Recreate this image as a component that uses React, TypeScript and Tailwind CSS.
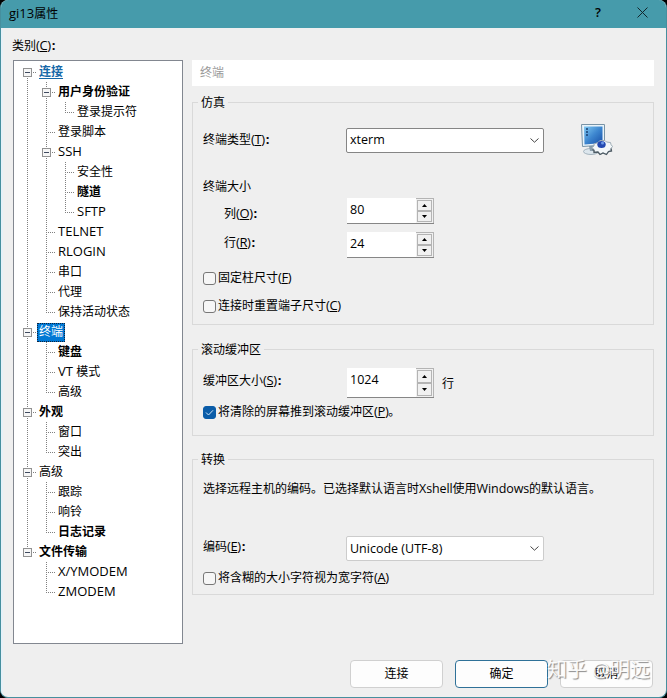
import React, { useState } from 'react';

type Guide = 'none' | 'line' | 'tee' | 'end' | 'boxFirst' | 'box' | 'boxLast';

type Item = {
  label: string;
  guides: Guide[];
  bold?: boolean;
  link?: boolean;
};

const items: Item[] = [
  { label: '连接', guides: ['boxFirst'], bold: true, link: true },
  { label: '用户身份验证', guides: ['line', 'box'], bold: true },
  { label: '登录提示符', guides: ['line', 'line', 'end'] },
  { label: '登录脚本', guides: ['line', 'tee'] },
  { label: 'SSH', guides: ['line', 'box'] },
  { label: '安全性', guides: ['line', 'line', 'tee'] },
  { label: '隧道', guides: ['line', 'line', 'tee'], bold: true },
  { label: 'SFTP', guides: ['line', 'line', 'end'] },
  { label: 'TELNET', guides: ['line', 'tee'] },
  { label: 'RLOGIN', guides: ['line', 'tee'] },
  { label: '串口', guides: ['line', 'tee'] },
  { label: '代理', guides: ['line', 'tee'] },
  { label: '保持活动状态', guides: ['line', 'end'] },
  { label: '终端', guides: ['box'] },
  { label: '键盘', guides: ['line', 'tee'], bold: true },
  { label: 'VT 模式', guides: ['line', 'tee'] },
  { label: '高级', guides: ['line', 'end'] },
  { label: '外观', guides: ['box'], bold: true },
  { label: '窗口', guides: ['line', 'tee'] },
  { label: '突出', guides: ['line', 'end'] },
  { label: '高级', guides: ['box'] },
  { label: '跟踪', guides: ['line', 'tee'] },
  { label: '响铃', guides: ['line', 'tee'] },
  { label: '日志记录', guides: ['line', 'end'], bold: true },
  { label: '文件传输', guides: ['boxLast'], bold: true },
  { label: 'X/YMODEM', guides: ['none', 'tee'] },
  { label: 'ZMODEM', guides: ['none', 'end'] },
];

// Latin runs are drawn a little larger than the 12px Chinese text
const Mixed = ({ text, className = 'text-[13px]' }: { text: string; className?: string }) => (
  <>
    {text.split(/([A-Za-z0-9/\-() :]+)/).map((part, i) =>
      i % 2 ? <span key={i} className={`leading-[15px] whitespace-pre ${className}`}>{part}</span> : part
    )}
  </>
);

const GuideCell = ({ kind }: { kind: Guide }) => {
  const hasBox = kind.startsWith('box');
  const top = kind !== 'none' && kind !== 'boxFirst';
  const bottom = kind === 'line' || kind === 'tee' || kind === 'box' || kind === 'boxFirst';
  return (
    <svg width="19" height="20" className="shrink-0" shapeRendering="crispEdges" fill="none" stroke="#808080">
      {top && <path d="M9.5 0V10" strokeDasharray="1 1" />}
      {bottom && <path d="M9.5 10V20" strokeDasharray="1 1" />}
      {kind !== 'none' && kind !== 'line' && <path d="M9 10.5H19" strokeDasharray="1 1" />}
      {hasBox && (
        <>
          <rect x="5.5" y="6.5" width="8" height="8" fill="#f6f6f6" stroke="#919191" />
          <path d="M7 10.5H12" stroke="#404b60" />
        </>
      )}
    </svg>
  );
};

const TreeRow = ({ item, selected, onClick }: { item: Item; selected: boolean; onClick: () => void }) => (
  <div className="flex h-5 items-center" onClick={onClick}>
    {item.guides.map((kind, i) => (
      <GuideCell key={i} kind={kind} />
    ))}
    <span
      className={`flex h-[19px] items-center whitespace-nowrap ${item.bold ? 'font-bold' : ''} ${
        selected
          ? 'bg-[#0078d4] px-0.5 text-white outline-1 -outline-offset-1 outline-dotted outline-[#10243c]'
          : 'pr-px pl-0.5'
      } ${item.link ? 'text-[#1668a8]' : ''}`}
    >
      <span className={item.link ? 'underline underline-offset-2' : ''}>
        <Mixed text={item.label} />
      </span>
    </span>
  </div>
);

const Hotkey = ({ letter, end = '' }: { letter: string; end?: string }) => (
  <span className="text-[13px] leading-[15px] tracking-[-0.4px]">
    (<span className="underline underline-offset-1">{letter}</span>){end && <b className="ml-px">{end}</b>}
  </span>
);

const Group = ({ title, className, children }: { title: string; className: string; children: React.ReactNode }) => (
  <fieldset className={`border border-[#d9d9d9] px-2.5 ${className}`}>
    <legend className="-ml-[5px] h-4 px-[3px] pt-px leading-4">{title}</legend>
    {children}
  </fieldset>
);

const Select = ({ value, className }: { value: string; className: string }) => (
  <div className={`flex h-[25px] w-[198px] items-center justify-between rounded-[2px] border bg-white pr-1 pl-[3px] ${className}`}>
    <span className="text-[12.5px]">{value}</span>
    <svg width="9" height="5" fill="none" stroke="#444">
      <path d="M.5 .5L4.5 4.2L8.5 .5" />
    </svg>
  </div>
);

const SpinButton = ({ up = false }: { up?: boolean }) => (
  <div className="flex flex-1 items-center justify-center border border-[#b4b4b4] bg-[#f1f1f1]">
    <svg width="5" height="3" fill="#000">
      <path d={up ? 'M0 3L2.5 0L5 3Z' : 'M0 0L2.5 3L5 0Z'} />
    </svg>
  </div>
);

const Spinner = ({ value, className }: { value: string; className: string }) => (
  <div className={`flex w-[87px] border-b border-[#868686] bg-white ${className}`}>
    <span className="flex-1 pl-[3px] text-[12.5px] leading-[23px]">{value}</span>
    <div className="flex w-[18px] flex-col border-t border-r border-[#b4b4b4] bg-[#f1f1f1] p-px">
      <SpinButton up />
      <SpinButton />
    </div>
  </div>
);

const Check = ({ label, letter, end, initial = false, className }: { label: string; letter: string; end?: string; initial?: boolean; className: string }) => {
  const [checked, setChecked] = useState(initial);
  return (
    <div className={`flex items-center ${className}`} onClick={() => setChecked(!checked)}>
      <span
        className={`mr-[3px] flex h-[13px] w-[13px] items-center justify-center rounded-[3px] border ${
          checked ? 'border-[#0a5ca8] bg-[#0a5ca8]' : 'border-[#777] bg-[#f6f6f6]'
        }`}
      >
        {checked && (
          <svg width="9" height="7" fill="none" stroke="#cfe6f8">
            <path d="M1 3.5L3.5 6L8 1.3" />
          </svg>
        )}
      </span>
      <span className="-ml-px whitespace-nowrap">
        {label}
        <Hotkey letter={letter} />
        {end}
      </span>
    </div>
  );
};

const DialogButton = ({ label, primary = false }: { label: string; primary?: boolean }) => (
  <button className={`h-7 w-[93px] rounded-[4px] border bg-[#fdfdfd] ${primary ? 'border-[#2f7198]' : 'border-[#d0d0d0]'}`}>
    {label}
  </button>
);

const TerminalIcon = () => (
  <svg width="34" height="34" viewBox="0 0 34 34">
    <defs>
      <linearGradient id="screen" x1="0" y1="0" x2="1" y2="1">
        <stop offset="0" stopColor="#7fc8f2" />
        <stop offset=".5" stopColor="#3d86cf" />
        <stop offset="1" stopColor="#174fa8" />
      </linearGradient>
    </defs>
    <ellipse cx="12" cy="28.5" rx="7.5" ry="3" fill="#dce6ed" stroke="#a3b3be" />
    <path d="M10 23h6l1 5h-6z" fill="#8a9eac" />
    <path d="M2.5 1.5L25.5 1.5V22L3.5 23.5Z" fill="#e8f3fa" stroke="#7893a6" />
    <path d="M5 3.5L23.5 3.5V20L5.5 21.5Z" fill="url(#screen)" />
    <path d="M7 6h2M7 9h2M7 12h2" stroke="#173f71" strokeWidth="1.5" />
    {/* gear lying flat in front of the monitor */}
    <path
      d="M15 21l4-1.5l2-2h5l1.5 1.5l4 .5l.5 2l1.5 2l-1.5 2l.5 2.5l-3 .5l-2 3l-3.5-1.5l-3 1.5l-2-2.5l-4 .5v-3l-2-2l2-1.5z"
      fill="#f3f7f9"
      stroke="#9dabb5"
    />
    <path d="M13.5 26.5l1.5 1v2l4-.5l2 2.5l3-1.5l3.5 1.5l2-3l3-.5l-.5-2.5" fill="none" stroke="#4f5c65" strokeWidth="1.3" />
    <ellipse cx="22.5" cy="21.5" rx="4.2" ry="3.6" fill="#2449b0" />
    <circle cx="23.5" cy="20" r="1.5" fill="#6f9be8" />
  </svg>
);

const App = () => {
  const [selected, setSelected] = useState(13);

  return (
    <div className="h-[698px] w-[667px] bg-black font-['Open_Sans','Noto_Sans_CJK_SC',sans-serif] text-[12px] leading-4 text-black select-none">
      <div className="relative flex h-full flex-col overflow-hidden rounded-lg border border-t-0 border-[#468f9e] bg-[#efefef]">
        <header className="flex h-7 shrink-0 items-center bg-[#469bab] pl-2">
          <h1 className="flex-1 pb-px">
            <Mixed text="gi13属性" />
          </h1>
          <span className="w-[42px] pb-1 text-[13px] font-semibold">?</span>
          <svg width="11" height="11" className="mr-[18px] mb-1" fill="none" stroke="#12262b">
            <path d="M.5 .5L10.5 10.5M10.5 .5L.5 10.5" />
          </svg>
        </header>

        <div className="flex flex-1 border-l-2 border-[#e5f1f8]">
          <aside className="ml-2.5 w-[170px]">
            <div className="flex h-8 items-center">
              <span className="-ml-px pt-1">
                类别
                <Hotkey letter="C" end=":" />
              </span>
            </div>
            <div className="h-[584px] border border-[#828790] bg-white pt-px pl-1">
              {items.map((item, i) => (
                <TreeRow key={i} item={item} selected={i === selected} onClick={() => setSelected(i)} />
              ))}
            </div>
          </aside>

          <main className="ml-[9px] w-[462px] pt-8">
            <div className="flex h-[26px] items-center bg-white pl-2 text-[#9a9a9a]">终端</div>

            <Group title="仿真" className="mt-2 h-[231px]">
              <div className="flex h-[60px] items-center">
                <span className="w-[143px]">
                  终端类型
                  <Hotkey letter="T" end=":" />
                </span>
                <Select value="xterm" className="border-[#858585]" />
                <div className="ml-[35px]">
                  <TerminalIcon />
                </div>
              </div>
              <div className="h-7 pt-[9px]">终端大小</div>
              <div className="flex pl-[21px]">
                <span className="w-[123px] pt-2">
                  列
                  <Hotkey letter="O" end=":" />
                </span>
                <Spinner value="80" className="h-[26px]" />
              </div>
              <div className="mt-2 flex pl-[21px]">
                <span className="w-[123px] pt-[3px]">
                  行
                  <Hotkey letter="R" end=":" />
                </span>
                <Spinner value="24" className="h-[26px]" />
              </div>
              <Check label="固定柱尺寸" letter="F" className="mt-[6px] h-7" />
              <Check label="连接时重置端子尺寸" letter="C" className="h-7" />
            </Group>

            <Group title="滚动缓冲区" className="mt-4 h-[95px]">
              <div className="flex pt-[11px]">
                <span className="w-36 pt-[5px]">
                  缓冲区大小
                  <Hotkey letter="S" end=":" />
                </span>
                <Spinner value="1024" className="h-[30px]" />
                <span className="pt-2 pl-2">行</span>
              </div>
              <Check label="将清除的屏幕推到滚动缓冲区" letter="P" end="。" initial className="h-7" />
            </Group>

            <Group title="转换" className="mt-[15px] h-36">
              <p className="flex h-[42px] items-center whitespace-nowrap">
                <span className="pt-px">
                  <Mixed text="选择远程主机的编码。已选择默认语言时Xshell使用Windows的默认语言。" className="text-[12.5px] tracking-[-0.1px]" />
                </span>
              </p>
              <div className="mt-[27px] flex">
                <span className="w-[143px] pt-[3px]">
                  编码
                  <Hotkey letter="E" end=":" />
                </span>
                <Select value="Unicode (UTF-8)" className="border-[#cccccc]" />
              </div>
              <Check label="将含糊的大小字符视为宽字符" letter="A" className="h-[34px]" />
            </Group>

            <div className="mt-[65px] mr-px flex justify-end gap-3">
              <DialogButton label="连接" />
              <DialogButton label="确定" primary />
              <DialogButton label="取消" />
            </div>
          </main>
        </div>

        <div className="pointer-events-none absolute right-4 bottom-[15px] text-[20px] leading-6 whitespace-nowrap text-white/90 [text-shadow:1px_1px_1px_#888]">
          知乎 @明远
        </div>
      </div>
    </div>
  );
};

export default App;
